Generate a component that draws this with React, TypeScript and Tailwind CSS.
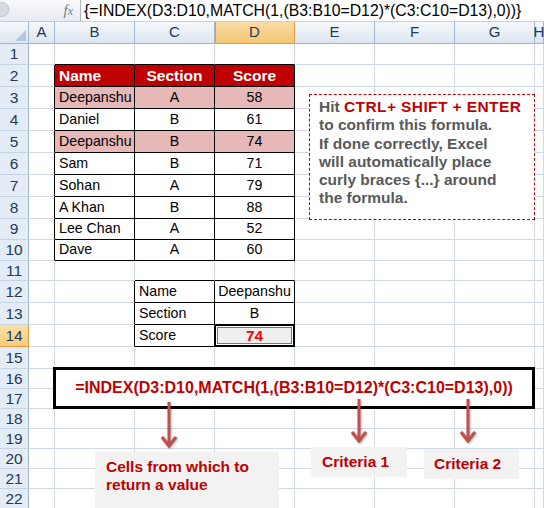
import React from "react";

const COLS = ["A", "B", "C", "D", "E", "F", "G", "H"];
const ROWS = Array.from({ length: 22 }, (_, i) => i + 1);

type CellSpec = { text: string; center?: boolean; cls?: string };

const HEAD = "bg-[#c00000] text-white font-bold text-[15.5px]";

const people: [string, string, string][] = [
  ["Deepanshu", "A", "58"],
  ["Daniel", "B", "61"],
  ["Deepanshu", "B", "74"],
  ["Sam", "B", "71"],
  ["Sohan", "A", "79"],
  ["A Khan", "B", "88"],
  ["Lee Chan", "A", "52"],
  ["Dave", "A", "60"],
];

const cells: Record<string, CellSpec> = {
  B2: { text: "Name", cls: HEAD },
  C2: { text: "Section", center: true, cls: HEAD },
  D2: { text: "Score", center: true, cls: HEAD },
  C12: { text: "Name" },
  D12: { text: "Deepanshu", center: true },
  C13: { text: "Section" },
  D13: { text: "B", center: true },
  C14: { text: "Score" },
  D14: {
    text: "74",
    center: true,
    cls: "bg-[#efefef] text-[#ff0000] font-bold text-[15.5px] shadow-[inset_0_0_0_1px_#000,inset_0_0_0_2px_#fff,inset_0_0_0_3px_#777]",
  },
};

people.forEach(([name, section, score], i) => {
  const r = i + 3;
  const body = r === 3 || r === 5 ? "bg-[#e6b8b7] text-black text-[14.2px]" : "text-black text-[14.2px]";
  cells[`B${r}`] = { text: name, cls: body };
  cells[`C${r}`] = { text: section, center: true, cls: body };
  cells[`D${r}`] = { text: score, center: true, cls: body };
});

const inTable = (c: string, r: number) =>
  (["B", "C", "D"].includes(c) && r >= 2 && r <= 10) || (["C", "D"].includes(c) && r >= 12 && r <= 14);

function Cell({ col, row }: { col: string; row: number }) {
  const spec = cells[`${col}${row}`];
  const rightBlack =
    inTable(col, row) || (col === "A" && row >= 2 && row <= 10) || (col === "B" && row >= 12 && row <= 14);
  const bottomBlack =
    inTable(col, row) ||
    (row === 1 && ["B", "C", "D"].includes(col)) ||
    (row === 11 && ["C", "D"].includes(col));

  return (
    <div
      className={`flex items-center overflow-hidden whitespace-nowrap border-r border-b ${
        rightBlack ? "border-r-black" : "border-r-[#d0d7e5]"
      } ${bottomBlack ? "border-b-black" : "border-b-[#d0d7e5]"} ${
        spec?.center ? "justify-center" : "pl-[4px]"
      } ${spec?.cls ?? "text-[14.2px] text-black"}`}
    >
      {spec?.text}
    </div>
  );
}

function Arrow({ className, h }: { className: string; h: number }) {
  return (
    <svg
      className={`absolute drop-shadow-[1px_1px_1px_rgba(0,0,0,0.3)] ${className}`}
      width="18"
      height={h}
      viewBox={`0 0 18 ${h}`}
    >
      <line x1="9" y1="0" x2="9" y2={h - 3} stroke="#c0504d" strokeWidth="3" />
      <polyline
        points={`2,${h - 11} 9,${h - 2} 16,${h - 11}`}
        fill="none"
        stroke="#c0504d"
        strokeWidth="3.2"
      />
    </svg>
  );
}

export default function App() {
  return (
    <div className="relative h-[508px] w-[544px] overflow-hidden bg-white font-['Liberation_Sans',Arial,sans-serif]">
      {/* formula bar */}
      <div className="flex h-[22px] border-b border-[#c3cfdf]">
        <div className="flex w-[81px] items-center border-r border-[#a9b6c8] bg-[linear-gradient(#f8f9fb,#e7ebf1)]">
          <svg width="12" height="21" viewBox="0 0 12 21">
            <circle cx="2" cy="9.5" r="7" fill="#d6dbe2" stroke="#c2c8d1" />
          </svg>
          <span className="ml-auto mr-[7px] font-['Liberation_Serif',serif] text-[15px] italic text-[#7a7a7a]">
            f<span className="text-[12px]">x</span>
          </span>
        </div>
        <div className="flex-1 whitespace-nowrap bg-white pl-[3px] text-[15.8px] leading-[21px] text-black">
          {"{=INDEX(D3:D10,MATCH(1,(B3:B10=D12)*(C3:C10=D13),0))}"}
        </div>
      </div>

      {/* sheet */}
      <div className="grid grid-cols-[29px_26px_80px_80px_80px_80px_80px_80px_9px] grid-rows-[22px_21px_22px_22px_22px_22px_22px_22px_22px_21px_21px_20px_22px_22px_22px_22px_20px_20px_20px_20px_20px_20px_20px]">
        <div className="flex items-end justify-end border-r border-b border-[#9eb6ce] bg-[linear-gradient(#f5f8fc,#dde5f0)] pr-[2px] pb-[2px]">
          <svg width="11" height="11" viewBox="0 0 11 11">
            <polygon points="11,0 11,11 0,11" fill="#b4c5dc" />
          </svg>
        </div>
        {COLS.map((c) => (
          <div
            key={c}
            className={`flex items-center justify-center border-r border-b text-[15px] text-[#1e395b] ${
              c === "D"
                ? "border-[#f29536] bg-[linear-gradient(#f9dca6,#f3c672)] shadow-[inset_1px_0_0_#f29536]"
                : "border-[#9eb6ce] bg-[linear-gradient(#f5f8fc,#dde5f0)]"
            }`}
          >
            {c}
          </div>
        ))}
        {ROWS.map((r) => (
          <React.Fragment key={r}>
            <div
              className={`flex items-center justify-center border-r border-b text-[15.5px] text-[#1e395b] ${
                r === 14
                  ? "border-[#f29536] bg-[linear-gradient(#fbdfa9,#f7cd7a)]"
                  : "border-r-[#9eb6ce] border-b-[#c5d3e4] bg-[#e4ecf7]"
              }`}
            >
              {r}
            </div>
            {COLS.map((c) => (
              <Cell key={c} col={c} row={r} />
            ))}
          </React.Fragment>
        ))}
      </div>

      {/* note box */}
      <div className="absolute left-[309px] top-[94px] h-[126px] w-[226px] whitespace-nowrap border border-dashed border-[#c00000] bg-white pl-[9px] pt-[3px] text-[15.5px] font-bold leading-[18.3px] text-[#595959]">
        <div>
          Hit <span className="tracking-[0.4px] text-[#c00000]">CTRL+ SHIFT + ENTER</span>
        </div>
        <div>to confirm this formula.</div>
        <div>If done correctly, Excel</div>
        <div>will automatically place</div>
        <div>curly braces {"{...}"} around</div>
        <div>the formula.</div>
      </div>

      {/* formula callout */}
      <div className="absolute left-[53px] top-[367px] flex h-[42px] w-[482px] items-center justify-center whitespace-nowrap border-[3px] border-black bg-white text-[16px] font-bold text-[#c00000]">
        =INDEX(D3:D10,MATCH(1,(B3:B10=D12)*(C3:C10=D13),0))
      </div>

      <Arrow className="left-[160px] top-[402px]" h={46} />
      <Arrow className="left-[350px] top-[399px]" h={44} />
      <Arrow className="left-[459px] top-[399px]" h={44} />

      <div className="absolute left-[95px] top-[452px] h-[58px] w-[184px] bg-[#f2f2f2] pl-[11px] pt-[6px] text-[15.5px] font-bold leading-[17.5px] text-[#c00000]">
        <div>Cells from which to</div>
        <div>return a value</div>
      </div>
      <div className="absolute left-[311px] top-[447px] flex h-[30px] w-[96px] items-center bg-[#f2f2f2] pl-[11px] text-[15.5px] font-bold text-[#c00000]">
        Criteria 1
      </div>
      <div className="absolute left-[424px] top-[449px] flex h-[30px] w-[95px] items-center bg-[#f2f2f2] pl-[10px] text-[15.5px] font-bold text-[#c00000]">
        Criteria 2
      </div>
    </div>
  );
}
